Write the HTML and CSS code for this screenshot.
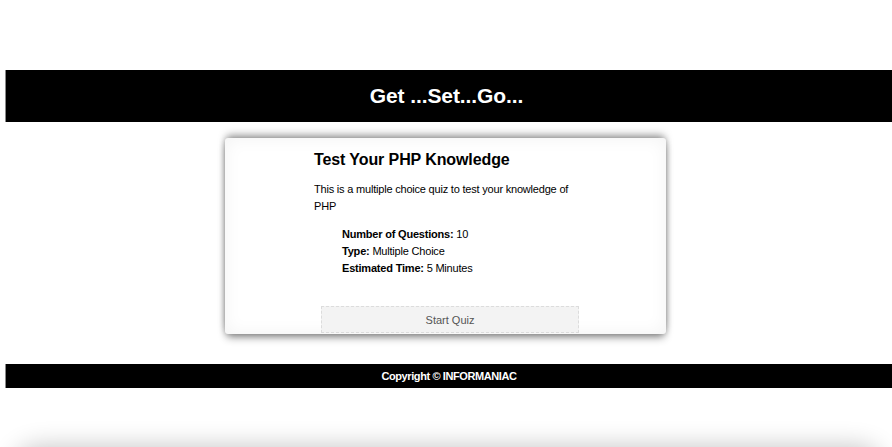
FILE: index.html
```html
<!DOCTYPE html>
<html>
<head>
<meta charset="utf-8">
<title>Get ...Set...Go...</title>
<link rel="stylesheet" href="styles.css">
</head>
<body>
<div class="page">
  <header class="banner">
    <h1 class="banner-title">Get ...Set...Go...</h1>
  </header>
  <main class="card">
    <div class="card-body">
      <h2 class="quiz-title">Test Your PHP Knowledge</h2>
      <p class="quiz-desc">This is a multiple choice quiz to test your knowledge of PHP</p>
      <ul class="quiz-meta">
        <li><b>Number of Questions:</b> 10</li>
        <li><b>Type:</b> Multiple Choice</li>
        <li><b>Estimated Time:</b> 5 Minutes</li>
      </ul>
      <button class="start-btn" type="button">Start Quiz</button>
    </div>
  </main>
  <footer class="footer">Copyright © INFORMANIAC</footer>
  <div class="below"></div>
</div>
</body>
</html>
```

FILE: styles.css
```css
html, body {
  margin: 0;
  padding: 0;
  background: #fff;
}
body {
  font-family: "Liberation Sans", Arial, Helvetica, sans-serif;
  color: #000;
}
.page {
  padding-top: 70px;
  padding-left: 5px;
}
.banner {
  background: #000;
  border-left: 1px solid #8a8a8a;
  height: 52px;
  display: flex;
  align-items: center;
  justify-content: center;
  padding-right: 5px;
}
.banner-title {
  margin: 0;
  color: #fff;
  font-size: 21px;
  font-weight: bold;
  letter-spacing: -0.1px;
}
.card {
  width: 441px;
  height: 196px;
  box-sizing: border-box;
  margin: 16px 0 0 220px;
  background: #fff;
  border-radius: 3px;
  box-shadow: 0 -5px 9px -2px rgba(0,0,0,0.35), 0 5px 9px -2px rgba(0,0,0,0.45), 0 0 6px rgba(0,0,0,0.2), inset 0 0 18px rgba(0,0,0,0.05);
  padding: 12px 0 0 89px;
}
.card-body {
  width: 265px;
}
.quiz-title {
  margin: 0;
  font-size: 16px;
  line-height: 20px;
  font-weight: bold;
  letter-spacing: -0.1px;
}
.quiz-desc {
  margin: 11px 0 0;
  font-size: 11px;
  line-height: 17px;
  letter-spacing: -0.2px;
}
.quiz-meta {
  list-style: none;
  margin: 11px 0 0;
  padding: 0 0 0 28px;
  font-size: 11px;
  line-height: 17px;
  letter-spacing: -0.2px;
}
.start-btn {
  display: block;
  margin: 29px 0 0 7px;
  width: 258px;
  height: 27px;
  background: #f3f3f3;
  border: 1px dashed #dcdcdc;
  color: #555;
  font-family: "Liberation Sans", Arial, Helvetica, sans-serif;
  font-size: 11px;
  padding: 0;
}
.footer {
  margin-top: 30px;
  background: #000;
  border-left: 1px solid #8a8a8a;
  height: 24px;
  display: flex;
  align-items: center;
  justify-content: center;
  color: #fff;
  font-size: 11px;
  font-weight: bold;
  letter-spacing: -0.4px;
}
.below {
  margin: 59px 10px 0 10px;
  height: 80px;
  border-radius: 24px;
  box-shadow: 0 0 26px rgba(0,0,0,0.24);
}
```
